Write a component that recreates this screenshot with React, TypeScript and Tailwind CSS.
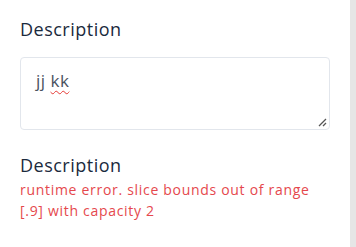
export default function App() {
  return (
    <div className="flex h-screen w-full overflow-hidden bg-white" style={{ fontFamily: '"Open Sans", sans-serif' }}>
      <div className="flex-1 pl-5 pr-5 pt-[15px]">
        <label className="block text-[18px] leading-[28px] font-medium text-[#1b2a3d] tracking-[0.5px]">Description</label>
        <div className="relative mt-[14px] h-[73px] w-[310px] rounded-[4px] border border-[#e2e6ec] px-[15px] py-[11px]">
          <span className="text-[17px] leading-[24px] text-[#4a5260] tracking-[0.5px]">
            jj{' '}
            <span className="underline decoration-wavy decoration-[#e53935] decoration-1 underline-offset-[3px]">kk</span>
          </span>
          <svg className="absolute bottom-[2px] right-[2px]" width="10" height="10" viewBox="0 0 10 10">
            <path d="M9 2 L2 9 M9 6 L6 9" stroke="#555" strokeWidth="1.3" />
          </svg>
        </div>
        <div className="mt-[21px]">
          <div className="text-[18px] leading-[28px] font-medium text-[#1b2a3d] tracking-[0.5px]">Description</div>
          <p className="w-[292px] text-[14px] leading-[21px] text-[#e5484d] tracking-[0.7px]">
            runtime error. slice bounds out of range [.9] with capacity 2
          </p>
        </div>
      </div>
      <div className="w-[7px] shrink-0 bg-[#e6e6e6]" />
    </div>
  );
}
